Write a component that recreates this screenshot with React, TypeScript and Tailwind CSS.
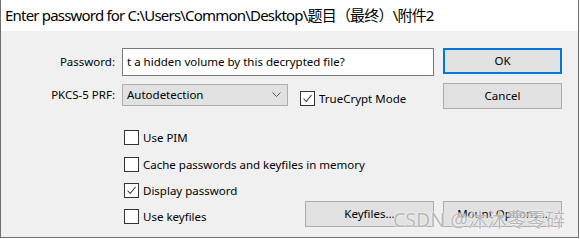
import React from "react";

const font = { fontFamily: '"Noto Sans", "Noto Sans CJK SC", sans-serif' };

function Check({ checked = false }: { checked?: boolean }) {
  return (
    <span className="flex h-[15px] w-[15px] shrink-0 items-center justify-center border border-[#333333] bg-white">
      {checked && (
        <svg width="11" height="11" viewBox="0 0 11 11">
          <polyline points="1.5,5.5 4.2,8.5 9.5,2" fill="none" stroke="#333" strokeWidth="1.1" />
        </svg>
      )}
    </span>
  );
}

function CheckRow({ label, checked }: { label: string; checked?: boolean }) {
  return (
    <div className="flex items-center gap-[4px]">
      <Check checked={checked} />
      <span className="leading-[15px]">{label}</span>
    </div>
  );
}

function Btn({ children, primary = false }: { children: React.ReactNode; primary?: boolean }) {
  return (
    <div
      className={
        "flex h-[26px] w-[119px] items-center justify-center bg-[#e1e1e1] " +
        (primary ? "border-2 border-[#0078d7]" : "border border-[#adadad]")
      }
    >
      {children}
    </div>
  );
}

export default function App() {
  return (
    <div
      className="relative h-[238px] w-[579px] border-x border-b border-[#707070] bg-[#f0f0f0] text-[11.5px] text-black"
      style={font}
    >
      <div className="flex h-[31px] items-center bg-white pl-[4px] text-[15px] tracking-[-0.8px]">
        Enter password for C:\Users\Common\Desktop\题目（最终）\附件2
      </div>

      <div className="flex pt-[17px]">
        <div className="w-[433px]">
          <div className="flex h-[28px] items-center">
            <span className="w-[114px] text-right">Password:</span>
            <div className="ml-[7px] flex h-[28px] w-[312px] items-center border border-[#7a7a7a] bg-white px-[4px]">
              t a hidden volume by this decrypted file?
            </div>
          </div>

          <div className="mt-[8px] flex h-[22px] items-center">
            <span className="w-[114px] text-right">PKCS-5 PRF:</span>
            <div className="ml-[7px] flex h-[22px] w-[166px] items-center justify-between border border-[#adadad] bg-[#e1e1e1] pl-[4px] pr-[6px]">
              <span>Autodetection</span>
              <svg width="9" height="6" viewBox="0 0 9 6">
                <polyline points="0.5,0.5 4.5,4.5 8.5,0.5" fill="none" stroke="#555" strokeWidth="1" />
              </svg>
            </div>
            <div className="ml-[12px] mt-[7px]">
              <CheckRow label="TrueCrypt Mode" checked />
            </div>
          </div>

          <div className="ml-[123px] mt-[24px] flex flex-col gap-[11.5px]">
            <CheckRow label="Use PIM" />
            <CheckRow label="Cache passwords and keyfiles in memory" />
            <CheckRow label="Display password" checked />
          </div>
        </div>

        <div className="ml-[9px] flex flex-col gap-[9px]">
          <Btn primary>OK</Btn>
          <Btn>Cancel</Btn>
        </div>
      </div>

      <div className="mt-[3px] flex items-start">
        <div className="ml-[123px] mt-[8px]">
          <CheckRow label="Use keyfiles" />
        </div>
        <div className="ml-auto mr-[16px] flex gap-[9px]">
          <div className="flex h-[26px] w-[129px] items-center justify-center border border-[#adadad] bg-[#e1e1e1]">
            Keyfiles...
          </div>
          <Btn>Mount Options...</Btn>
        </div>
      </div>

      <div
        className="pointer-events-none absolute left-[392px] top-[205px] text-[19.5px] text-[#a0a0a0]/75"
        style={{ textShadow: "0 0 1px #fff, 0 0 2px #fff" }}
      >
        CSDN @沐沐零零碎
      </div>
    </div>
  );
}
